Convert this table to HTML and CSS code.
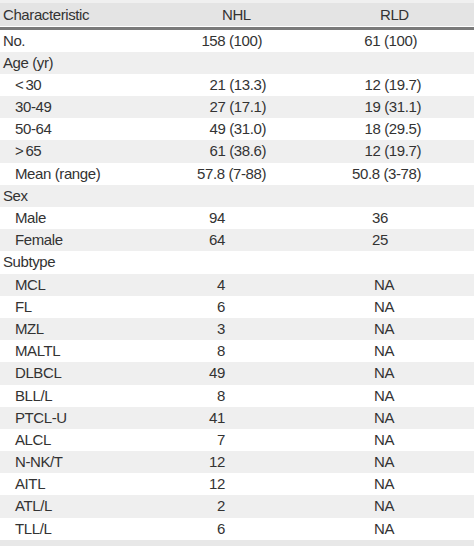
FILE: index.html
```html
<!DOCTYPE html>
<html>
<head>
<meta charset="utf-8">
<link rel="stylesheet" href="styles.css">
</head>
<body>
<div class="table">
  <div class="top-strip"></div>
  <div class="row head">
    <div class="c1">Characteristic</div>
    <div class="c2 h">NHL</div>
    <div class="c3 h">RLD</div>
  </div>
  <div class="rule"></div>

  <div class="row pct first"><div class="c1">No.</div><div class="c2">158 (100)</div><div class="c3">61 (100)</div></div>
  <div class="row g"><div class="c1">Age (yr)</div><div class="c2"></div><div class="c3"></div></div>
  <div class="row pct"><div class="c1 ind"><span class="op">&lt;</span>30</div><div class="c2">21 (13.3)</div><div class="c3">12 (19.7)</div></div>
  <div class="row pct g"><div class="c1 ind">30-49</div><div class="c2">27 (17.1)</div><div class="c3">19 (31.1)</div></div>
  <div class="row pct"><div class="c1 ind">50-64</div><div class="c2">49 (31.0)</div><div class="c3">18 (29.5)</div></div>
  <div class="row pct g"><div class="c1 ind"><span class="op">&gt;</span>65</div><div class="c2">61 (38.6)</div><div class="c3">12 (19.7)</div></div>
  <div class="row pct"><div class="c1 ind">Mean (range)</div><div class="c2">57.8 (7-88)</div><div class="c3">50.8 (3-78)</div></div>
  <div class="row g"><div class="c1">Sex</div><div class="c2"></div><div class="c3"></div></div>
  <div class="row sex"><div class="c1 ind">Male</div><div class="c2">94</div><div class="c3">36</div></div>
  <div class="row sex g"><div class="c1 ind">Female</div><div class="c2">64</div><div class="c3">25</div></div>
  <div class="row"><div class="c1">Subtype</div><div class="c2"></div><div class="c3"></div></div>
  <div class="row sub g"><div class="c1 ind">MCL</div><div class="c2">4</div><div class="c3">NA</div></div>
  <div class="row sub"><div class="c1 ind">FL</div><div class="c2">6</div><div class="c3">NA</div></div>
  <div class="row sub g"><div class="c1 ind">MZL</div><div class="c2">3</div><div class="c3">NA</div></div>
  <div class="row sub"><div class="c1 ind">MALTL</div><div class="c2">8</div><div class="c3">NA</div></div>
  <div class="row sub g"><div class="c1 ind">DLBCL</div><div class="c2">49</div><div class="c3">NA</div></div>
  <div class="row sub"><div class="c1 ind">BLL/L</div><div class="c2">8</div><div class="c3">NA</div></div>
  <div class="row sub g"><div class="c1 ind">PTCL-U</div><div class="c2">41</div><div class="c3">NA</div></div>
  <div class="row sub"><div class="c1 ind">ALCL</div><div class="c2">7</div><div class="c3">NA</div></div>
  <div class="row sub g"><div class="c1 ind">N-NK/T</div><div class="c2">12</div><div class="c3">NA</div></div>
  <div class="row sub"><div class="c1 ind">AITL</div><div class="c2">12</div><div class="c3">NA</div></div>
  <div class="row sub g"><div class="c1 ind">ATL/L</div><div class="c2">2</div><div class="c3">NA</div></div>
  <div class="row sub"><div class="c1 ind">TLL/L</div><div class="c2">6</div><div class="c3">NA</div></div>
  <div class="bottom-strip"></div>
</div>
</body>
</html>
```

FILE: styles.css
```css
html, body {
  margin: 0;
  padding: 0;
  background: #ffffff;
}

.table {
  width: 474px;
  font-family: "Liberation Sans", Arial, sans-serif;
  font-size: 15px;
  letter-spacing: -0.4px;
  color: #333333;
}

.top-strip {
  height: 3px;
  background: #f0f0f0;
}

.row {
  display: grid;
  grid-template-columns: 190px 80px 155px 1fr;
  height: 22.2px;
  line-height: 22.2px;
  white-space: nowrap;
}

.row.g {
  background: #efefef;
}

.c1 {
  padding-left: 3px;
}

.c1.ind {
  padding-left: 15px;
}

.op {
  margin-right: 2px;
}

.head {
  height: 23px;
  line-height: 23px;
  background: #e4e4e4;
  border-bottom: 1.5px solid #ffffff;
}

.head .c2 {
  grid-column: 2 / 3;
  padding-left: 32px;
}

.head .c3 {
  grid-column: 3 / 5;
  padding-left: 110px;
}

.rule {
  height: 2.5px;
  background: #7a7a7a;
}

.pct .c2 {
  text-align: right;
  padding-right: 4px;
}

.pct .c3 {
  text-align: right;
  padding-right: 4px;
}

.pct.first .c2 {
  padding-right: 8px;
}

.pct.first .c3 {
  padding-right: 8px;
}

.sex .c2,
.sub .c2 {
  text-align: right;
  padding-right: 45px;
}

.sex .c3 {
  padding-left: 102px;
}

.sub .c3 {
  padding-left: 104px;
}

.bottom-strip {
  height: 6px;
  background: #e8e8e8;
}
```
